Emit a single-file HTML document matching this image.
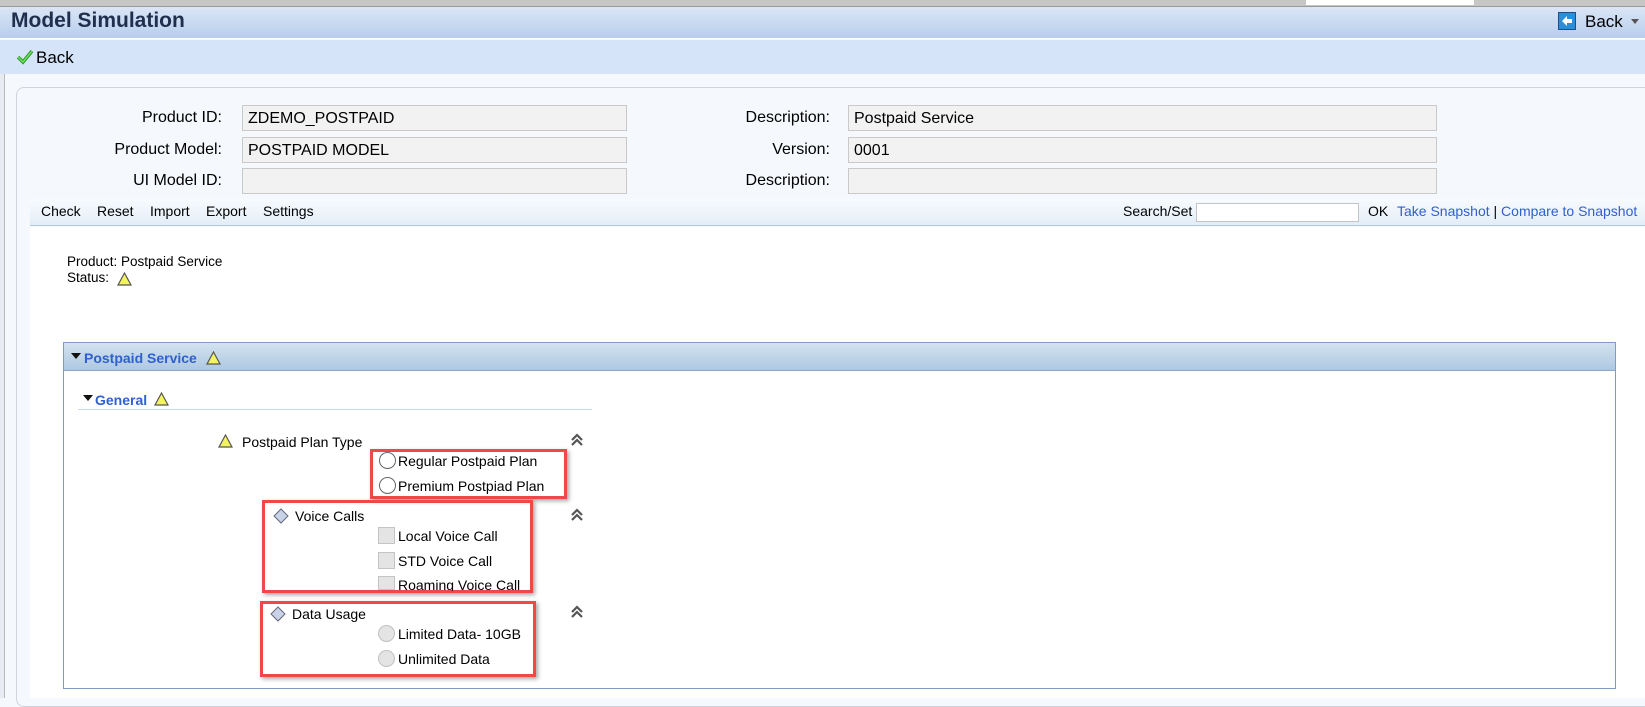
<!DOCTYPE html>
<html><head><meta charset="utf-8"><style>
*{margin:0;padding:0;box-sizing:border-box}
body{width:1645px;height:698px;overflow:hidden;background:#f5f8fc;font-family:"Liberation Sans",Arial,sans-serif;color:#000;position:relative}
.a{position:absolute;white-space:nowrap}
.lbl{font-size:16px;text-align:right}
.inp{position:absolute;background:#f2f2f2;border:1px solid #c9c9c9;font-size:16px;padding:4px 5px 0;height:26px}
.t14{font-size:14px}
.red{position:absolute;border:3px solid #f04848;box-shadow:2px 2px 4px rgba(0,0,0,.35)}
.cb{position:absolute;width:17px;height:17px;background:#e4e4e4;border:1px solid #c4c4c4}
.rd{position:absolute;width:17px;height:17px;border-radius:50%;border:1.5px solid #666;background:#fff}
.rdd{position:absolute;width:17px;height:17px;border-radius:50%;border:1px solid #c0c0c0;background:#e4e4e4}
</style></head><body>
<div class="a" style="left:0;top:0;width:1645px;height:7px;background:#c6c6c6;border-bottom:1px solid #999"></div>
<div class="a" style="left:1306px;top:0;width:168px;height:5px;background:#fff"></div>
<div class="a" style="left:0;top:7px;width:1645px;height:32px;background:linear-gradient(#dbe6f6,#b8cdec);border-bottom:1px solid #fff"></div>
<div class="a" style="left:11px;top:9px;font-size:21px;font-weight:bold;color:#1f2f4d">Model Simulation</div>
<svg class="a" style="left:1558px;top:12px" width="18" height="18"><rect x="0.5" y="0.5" width="17" height="17" fill="#2a8fd8" stroke="#1c4f8a"/><path d="M4 9 L9 4 L9 7 L14 7 L14 11 L9 11 L9 14 Z" fill="#fff"/></svg>
<div class="a" style="left:1585px;top:12px;font-size:17px">Back</div>
<div class="a" style="left:1631px;top:19px;width:0;height:0;border-left:4px solid transparent;border-right:4px solid transparent;border-top:5px solid #555"></div>
<div class="a" style="left:0;top:40px;width:1645px;height:34px;background:#d5e4f8"></div>
<svg class="a" style="left:16px;top:49px" width="18" height="16"><path d="M2 8 L7 13 L16 2" stroke="#2a9a2a" stroke-width="3.5" fill="none"/><path d="M2 8 L7 13 L16 2" stroke="#6fe05a" stroke-width="1.5" fill="none"/></svg>
<div class="a" style="left:36px;top:48px;font-size:17px">Back</div>
<div class="a" style="left:0;top:74px;width:5px;height:624px;background:#e8ecf2;border-right:1px solid #bbb"></div>
<div class="a" style="left:16px;top:87px;width:1640px;height:620px;border:1px solid #d0d4da;border-radius:8px;background:#f5f8fc"></div>
<div class="a lbl" style="left:80px;width:142px;top:109px">Product ID:</div>
<div class="a lbl" style="left:80px;width:142px;top:141px">Product Model:</div>
<div class="a lbl" style="left:80px;width:142px;top:172px">UI Model ID:</div>
<div class="inp" style="left:242px;top:105px;width:385px">ZDEMO_POSTPAID</div>
<div class="inp" style="left:242px;top:137px;width:385px">POSTPAID MODEL</div>
<div class="inp" style="left:242px;top:168px;width:385px"></div>
<div class="a lbl" style="left:680px;width:150px;top:109px">Description:</div>
<div class="a lbl" style="left:680px;width:150px;top:141px">Version:</div>
<div class="a lbl" style="left:680px;width:150px;top:172px">Description:</div>
<div class="inp" style="left:848px;top:105px;width:589px">Postpaid Service</div>
<div class="inp" style="left:848px;top:137px;width:589px">0001</div>
<div class="inp" style="left:848px;top:168px;width:589px"></div>
<div class="a" style="left:30px;top:199px;width:1615px;height:27px;background:linear-gradient(#f8fbfe,#e3edf8);border-bottom:1px solid #b8c8dc"></div>
<div class="a t14" style="left:41px;top:203px">Check</div>
<div class="a t14" style="left:97px;top:203px">Reset</div>
<div class="a t14" style="left:150px;top:203px">Import</div>
<div class="a t14" style="left:206px;top:203px">Export</div>
<div class="a t14" style="left:263px;top:203px">Settings</div>
<div class="a t14" style="left:1123px;top:203px">Search/Set</div>
<div class="a" style="left:1196px;top:203px;width:163px;height:19px;background:#fff;border:1px solid #c4c4c4"></div>
<div class="a t14" style="left:1368px;top:203px">OK</div>
<div class="a t14" style="left:1397px;top:203px;color:#2f5fd0">Take Snapshot <span style="color:#000">|</span> Compare to Snapshot</div>
<div class="a" style="left:30px;top:227px;width:1615px;height:471px;background:#fff"></div>
<div class="a t14" style="left:67px;top:254px;font-size:13.5px">Product: Postpaid Service</div>
<div class="a t14" style="left:67px;top:270px;font-size:13.5px">Status:</div>
<svg class="a" style="left:117px;top:272px" width="15" height="14"><path d="M7.5 1 L14 13 L1 13 Z" fill="#f4f460" stroke="#555" stroke-width="1.2"/></svg>
<div class="a" style="left:63px;top:342px;width:1553px;height:347px;border:1px solid #7f9cc2;background:#fff"></div>
<div class="a" style="left:64px;top:343px;width:1551px;height:28px;background:linear-gradient(#d3e2ef,#aec8e2);border-bottom:1px solid #8aa7c8"></div>
<div class="a" style="left:71px;top:353px;width:0;height:0;border-left:5px solid transparent;border-right:5px solid transparent;border-top:6px solid #111"></div>
<div class="a" style="left:84px;top:350px;font-size:14px;font-weight:bold;color:#2f5fd0">Postpaid Service</div>
<svg class="a" style="left:206px;top:351px" width="15" height="14"><path d="M7.5 1 L14 13 L1 13 Z" fill="#f4f460" stroke="#555" stroke-width="1.2"/></svg>
<div class="a" style="left:83px;top:395px;width:0;height:0;border-left:5px solid transparent;border-right:5px solid transparent;border-top:6px solid #111"></div>
<div class="a" style="left:95px;top:392px;font-size:14px;font-weight:bold;color:#2f5fd0">General</div>
<svg class="a" style="left:154px;top:392px" width="15" height="14"><path d="M7.5 1 L14 13 L1 13 Z" fill="#f4f460" stroke="#555" stroke-width="1.2"/></svg>
<div class="a" style="left:78px;top:409px;width:514px;height:1px;background:#c6d8ec"></div>
<svg class="a" style="left:218px;top:434px" width="15" height="14"><path d="M7.5 1 L14 13 L1 13 Z" fill="#f4f460" stroke="#555" stroke-width="1.2"/></svg>
<div class="a t14" style="left:242px;top:434px">Postpaid Plan Type</div>
<svg class="a" style="left:570px;top:433px" width="14" height="14"><path d="M2 7 L7 2 L12 7 M2 12 L7 7 L12 12" stroke="#555" stroke-width="2.2" fill="none"/></svg>
<div class="red" style="left:370px;top:449px;width:197px;height:50px"></div>
<div class="rd" style="left:379px;top:452px"></div>
<div class="a t14" style="left:398px;top:453px">Regular Postpaid Plan</div>
<div class="rd" style="left:379px;top:477px"></div>
<div class="a t14" style="left:398px;top:478px">Premium Postpiad Plan</div>
<div class="red" style="left:262px;top:500px;width:271px;height:93px"></div>
<svg class="a" style="left:273px;top:508px" width="16" height="16"><path d="M8 1 L15 8 L8 15 L1 8 Z" fill="#c8d2e8" stroke="#667" stroke-width="1"/></svg>
<div class="a t14" style="left:295px;top:508px">Voice Calls</div>
<svg class="a" style="left:570px;top:508px" width="14" height="14"><path d="M2 7 L7 2 L12 7 M2 12 L7 7 L12 12" stroke="#555" stroke-width="2.2" fill="none"/></svg>
<div class="cb" style="left:378px;top:527px"></div>
<div class="a t14" style="left:398px;top:528px">Local Voice Call</div>
<div class="cb" style="left:378px;top:552px"></div>
<div class="a t14" style="left:398px;top:553px">STD Voice Call</div>
<div class="cb" style="left:378px;top:576px;height:14px"></div>
<div class="a t14" style="left:398px;top:577px;height:14px;overflow:hidden">Roaming Voice Call</div>
<div class="red" style="left:260px;top:601px;width:276px;height:76px"></div>
<svg class="a" style="left:270px;top:606px" width="16" height="16"><path d="M8 1 L15 8 L8 15 L1 8 Z" fill="#c8d2e8" stroke="#667" stroke-width="1"/></svg>
<div class="a t14" style="left:292px;top:606px">Data Usage</div>
<svg class="a" style="left:570px;top:605px" width="14" height="14"><path d="M2 7 L7 2 L12 7 M2 12 L7 7 L12 12" stroke="#555" stroke-width="2.2" fill="none"/></svg>
<div class="rdd" style="left:378px;top:625px"></div>
<div class="a t14" style="left:398px;top:626px">Limited Data- 10GB</div>
<div class="rdd" style="left:378px;top:650px"></div>
<div class="a t14" style="left:398px;top:651px">Unlimited Data</div>
</body></html>
